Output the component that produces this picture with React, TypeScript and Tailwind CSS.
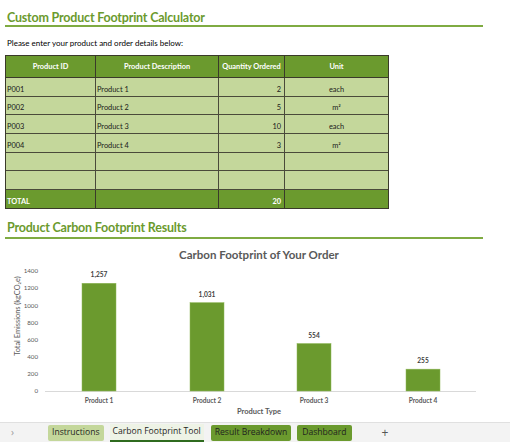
import React from "react";

const rows = [
  ["P001", "Product 1", "2", "each"],
  ["P002", "Product 2", "5", "m²"],
  ["P003", "Product 3", "10", "each"],
  ["P004", "Product 4", "3", "m²"],
  ["", "", "", ""],
  ["", "", "", ""],
];

const bars = [
  { label: "Product 1", value: 1257, x: 82 },
  { label: "Product 2", value: 1031, x: 190 },
  { label: "Product 3", value: 554, x: 297 },
  { label: "Product 4", value: 255, x: 406 },
];

function Chart() {
  const base = 152;
  const scale = 120 / 1400;
  const ticks = [0, 200, 400, 600, 800, 1000, 1200, 1400];
  return (
    <svg width={510} height={180} className="block" style={{ fontFamily: "Lato, 'Open Sans', sans-serif" }}>
      <text x={259} y={20} textAnchor="middle" fontSize={11.5} fontWeight={700} fill="#595959">
        Carbon Footprint of Your Order
      </text>
      {ticks.map((t) => (
        <text key={t} x={38} y={base - t * scale + 2.3} textAnchor="end" fontSize={6.2} fill="#595959">
          {t}
        </text>
      ))}
      <line x1={45} y1={base + 0.5} x2={476} y2={base + 0.5} stroke="#d9d9d9" strokeWidth={1} />
      {bars.map((b) => {
        const h = b.value * scale;
        return (
          <g key={b.label}>
            <rect x={b.x} y={base - h} width={34} height={h} fill="#6b9a2e" stroke="#8fb85a" strokeWidth={0.5} />
            <text x={b.x + 17} y={base - h - 6} textAnchor="middle" fontSize={6.6} fontWeight={700} fill="#404040">
              {b.value.toLocaleString("en-US")}
            </text>
            <text x={b.x + 17} y={164} textAnchor="middle" fontSize={6.6} fontWeight={700} fill="#595959">
              {b.label}
            </text>
          </g>
        );
      })}
      <text x={259} y={175} textAnchor="middle" fontSize={7.5} fontWeight={700} fill="#595959">
        Product Type
      </text>
      <text
        x={0}
        y={0}
        transform="translate(20 77) rotate(-90)"
        textAnchor="middle"
        fontSize={7.4}
        fill="#595959"
      >
        Total Emissions (kgCO₂e)
      </text>
    </svg>
  );
}

export default function App() {
  const font = { fontFamily: "Lato, 'Open Sans', 'Liberation Sans', sans-serif" };
  return (
    <div className="w-[510px] h-[442px] bg-white overflow-hidden flex flex-col" style={font}>
      <div className="flex-1 flex flex-col">
        <div className="pl-[7px] pt-[10px] h-[25px] text-[12.5px] leading-[16px] font-bold text-[#6b9a2e] tracking-[-0.2px]">
          Custom Product Footprint Calculator
        </div>
        <div className="ml-[5px] w-[478px] h-[2px] bg-[#7fab42]" />
        <div className="pl-[7px] mt-[11px] text-[8px] leading-[11px] text-black">
          Please enter your product and order details below:
        </div>
        <div className="ml-[5px] mt-[6px] w-[384px] border border-[#3a3a2a] text-[7.4px] leading-[9px]">
          <div className="grid grid-cols-[90px_123px_66px_1fr] bg-[#6b9a2e] h-[22px] border-b border-[#3a3a2a]">
            {["Product ID", "Product Description", "Quantity Ordered", "Unit"].map((h, i) => (
              <div
                key={h}
                className={`flex items-center justify-center text-white font-bold ${i < 3 ? "border-r border-[#3a3a2a]" : ""}`}
              >
                {h}
              </div>
            ))}
          </div>
          {rows.map((r, ri) => (
            <div
              key={ri}
              className="grid grid-cols-[90px_123px_66px_1fr] bg-[#c4d79b] h-[18.7px] border-b border-[#4a4a3a] text-[#1a1a1a]"
            >
              <div className="flex items-end pl-[1px] pb-[2px] border-r border-[#4a4a3a]">{r[0]}</div>
              <div className="flex items-end pl-[1px] pb-[2px] border-r border-[#4a4a3a]">{r[1]}</div>
              <div className="flex items-end justify-end pr-[3px] pb-[2px] border-r border-[#4a4a3a]">{r[2]}</div>
              <div className="flex items-end justify-center pb-[2px]">{r[3]}</div>
            </div>
          ))}
          <div className="grid grid-cols-[90px_123px_66px_1fr] bg-[#6b9a2e] h-[18px] text-white font-bold">
            <div className="flex items-end pl-[1px] pb-[2px] border-r border-[#3a3a2a]">TOTAL</div>
            <div className="border-r border-[#3a3a2a]" />
            <div className="flex items-end justify-end pr-[3px] pb-[2px] border-r border-[#3a3a2a]">20</div>
            <div />
          </div>
        </div>
        <div className="pl-[7px] mt-[11px] h-[16px] text-[12.5px] leading-[16px] font-bold text-[#6b9a2e] tracking-[-0.2px]">
          Product Carbon Footprint Results
        </div>
        <div className="ml-[5px] mt-[1px] w-[478px] h-[2px] bg-[#7fab42]" />
        <Chart />
      </div>
      <div className="h-[20px] bg-[#f3f3f3] border-t border-[#e0e0e0] flex items-center text-[8.6px]" style={{ fontFamily: "'Open Sans', 'Liberation Sans', sans-serif" }}>
        <div className="w-[40px] pl-[11px] text-[#9a9a9a] text-[10px]">›</div>
        <div className="ml-[8px] h-[16px] px-[4px] flex items-center rounded-[2px] bg-[#c4d79b] text-[#1f1f1f]">Instructions</div>
        <div className="ml-[6px] h-[18px] px-[3px] flex items-center bg-[#eef3e6] text-[#1f1f1f] border-b-2 border-[#2f6b1f]">
          Carbon Footprint Tool
        </div>
        <div className="ml-[7px] h-[16px] px-[4px] flex items-center rounded-[2px] bg-[#6b9a2e] text-[#1f1f1f]">Result Breakdown</div>
        <div className="ml-[6px] h-[16px] px-[5px] flex items-center rounded-[2px] bg-[#6b9a2e] text-[#1f1f1f]">Dashboard</div>
        <div className="ml-[30px] text-[#555] text-[12px]">+</div>
      </div>
    </div>
  );
}
